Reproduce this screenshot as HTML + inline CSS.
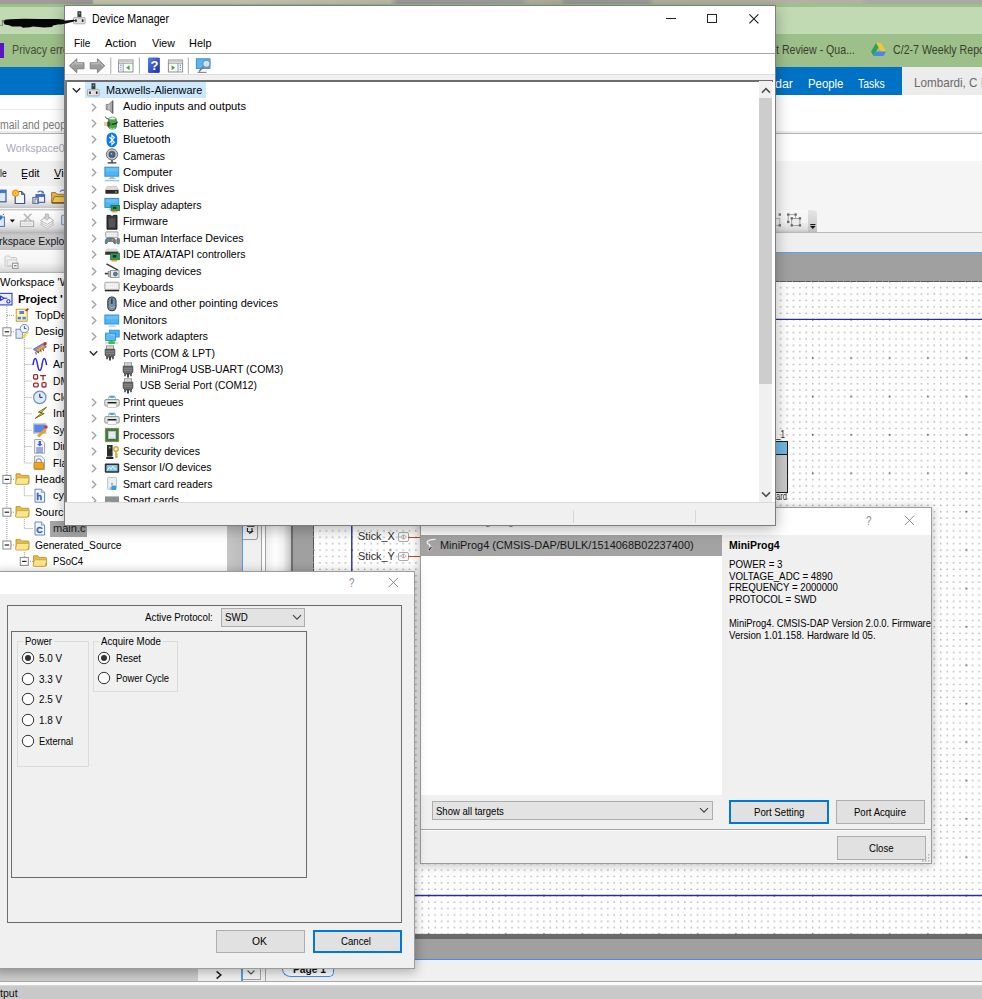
<!DOCTYPE html>
<html><head><meta charset="utf-8"><title>screenshot</title>
<style>
html,body{margin:0;padding:0;}
body{width:982px;height:999px;overflow:hidden;position:relative;background:#fff;font-family:"Liberation Sans",sans-serif;font-size:11px;}
.b{position:absolute;box-sizing:border-box;}
.t{position:absolute;white-space:nowrap;transform-origin:0 50%;}
svg{position:absolute;overflow:visible;}
.win{position:absolute;box-sizing:border-box;overflow:hidden;}
</style></head><body>
<!-- desktop / browser / outlook background -->
<div class="b" style="left:0.00px;top:0.00px;width:982.00px;height:5.00px;background:linear-gradient(90deg,#a29b9c 0,#a29b9c 92px,#c8c6b0 94px,#cbc9b3 250px,#c0beaa 390px,#9d9d9c 398px,#a3a3a0 520px,#b6b5a2 530px,#b0af9f 560px,#9b9b99 566px,#a09f9c 648px,#b5b4a3 655px,#b2b1a1 860px,#a9a9a6 868px,#a9a9a6 982px);"></div>
<div class="b" style="left:0.00px;top:4.00px;width:982.00px;height:4.00px;background:#9bc388;"></div>
<div class="b" style="left:0.00px;top:7.00px;width:982.00px;height:27.00px;background:#c1dab3;"></div>
<div class="b" style="left:0.00px;top:33.60px;width:982.00px;height:33.40px;background:#9dc08a;"></div>
<svg style="left:0;top:14px" width="90" height="18" viewBox="0 14 90 18"><path d="M3.6 21.4 L5 19.8 L10 19.2 L24 18.8 L40 18.9 L58 19.1 L66 20 L74 20.6 L75 21.6 L66 23.5 L58 24.6 L53 25.4 L52 27 L44 27.4 L33 26.6 L30 27.2 L23 27.8 L21 26.6 L12 26.6 L9 25.2 L4.6 24.6 L3.8 22.8Z" fill="#060606"/></svg>
<span class="t" style="left:0.00px;top:15.10px;font-size:11px;line-height:14px;color:#2a2a2a;transform:scaleX(0.5358);">.r</span>
<div class="b" style="left:0.00px;top:43.30px;width:4.00px;height:14.30px;background:#5b12c9;"></div>
<span class="t" style="left:11.70px;top:43.00px;font-size:12px;line-height:14px;color:#4a4a3c;transform:scaleX(0.8905);">Privacy erro</span>
<span class="t" style="left:776.00px;top:43.00px;font-size:12px;line-height:14px;color:#3c3c30;transform:scaleX(0.8841);">t Review - Qua...</span>
<svg style="left:871px;top:43px" width="15" height="13" viewBox="0 0 15 13"><path d="M5 0 L10 0 L15 8.5 L10 8.5Z" fill="#f7c62f"/><path d="M5 0 L0 8.5 L2.5 13 L7.5 4.3Z" fill="#2ba160"/><path d="M2.5 13 L12.5 13 L15 8.5 L5 8.5Z" fill="#4a86e8"/></svg>
<span class="t" style="left:892.50px;top:43.00px;font-size:12px;line-height:14px;color:#3c3c30;transform:scaleX(0.8862);">C/2-7 Weekly Repo</span>
<div class="b" style="left:0.00px;top:66.70px;width:982.00px;height:28.50px;background:#0072c6;"></div>
<div class="b" style="left:901.50px;top:66.70px;width:81.00px;height:28.50px;background:#ececec;"></div>
<span class="t" style="left:775.40px;top:76.80px;font-size:13px;line-height:14px;color:#fff;transform:scaleX(0.9581);">dar</span>
<span class="t" style="left:808.00px;top:76.80px;font-size:13px;line-height:14px;color:#fff;transform:scaleX(0.8746);">People</span>
<span class="t" style="left:858.00px;top:76.80px;font-size:13px;line-height:14px;color:#fff;transform:scaleX(0.8005);">Tasks</span>
<span class="t" style="left:913.50px;top:75.80px;font-size:13px;line-height:14px;color:#6a6a6a;transform:scaleX(0.8971);">Lombardi, C I</span>
<div class="b" style="left:0.00px;top:95.20px;width:982.00px;height:38.30px;background:#fff;"></div>
<div class="b" style="left:0.00px;top:108.60px;width:66.00px;height:1.00px;background:#e3ecf5;"></div>
<span class="t" style="left:0.00px;top:117.80px;font-size:12.5px;line-height:14px;color:#7a7a7a;transform:scaleX(0.8405);">mail and peop</span>
<!-- PSoC Creator window -->
<div class="b" style="left:0.00px;top:130.50px;width:982.00px;height:3.00px;background:#ececec;"></div>
<div class="b" style="left:0.00px;top:133.00px;width:982.00px;height:1.00px;background:#b4b4b4;"></div>
<div class="b" style="left:0.00px;top:134.00px;width:982.00px;height:27.20px;background:#fff;"></div>
<span class="t" style="left:5.70px;top:140.60px;font-size:11px;line-height:14px;color:#a9aab8;transform:scaleX(0.9601);">Workspace0</span>
<div class="b" style="left:0.00px;top:161.20px;width:982.00px;height:71.00px;background:#f5f5f5;"></div>
<div class="b" style="left:0.00px;top:161.20px;width:66.00px;height:25.00px;background:#f0f0f0;"></div>
<span class="t" style="left:0.00px;top:166.20px;font-size:11.5px;line-height:14px;color:#000;transform:scaleX(0.7374);">le</span>
<span class="t" style="left:21.30px;top:166.20px;font-size:11.5px;line-height:14px;color:#000;transform:scaleX(0.9336);">Edit</span>
<span class="t" style="left:54.20px;top:166.20px;font-size:11.5px;line-height:14px;color:#000;transform:scaleX(0.9749);">Vie</span>
<div class="b" style="left:21.50px;top:177.80px;width:5.40px;height:1.00px;background:#000;"></div>
<div class="b" style="left:54.30px;top:177.80px;width:6.00px;height:1.00px;background:#000;"></div>
<div class="b" style="left:0.00px;top:186.20px;width:66.00px;height:22.30px;background:linear-gradient(#fafafa 0,#f4f4f4 55%,#dadada 86%,#c2c2c2 100%);"></div>
<svg style="left:0;top:186px" width="66" height="23" viewBox="0 186 66 23"><rect x="-3" y="190.3" width="9" height="11.5" fill="#dfe9f8" stroke="#46629e" stroke-width="1.3"/><rect x="-3" y="190.3" width="9" height="2.8" fill="#3f78dc"/><path d="M15.2 191.5 L21.5 191.5 L24.6 194.5 L24.6 203.5 L15.2 203.5Z" fill="#f2f5fb" stroke="#3f5488" stroke-width="1.2"/><path d="M21.5 191.5 L21.5 194.5 L24.6 194.5" fill="#6f80a8" stroke="#3f5488" stroke-width=".8"/><circle cx="15.6" cy="193.2" r="3.6" fill="#f59a18"/><circle cx="15.6" cy="193.2" r="2" fill="#ffd84a"/><circle cx="15.6" cy="193.2" r=".8" fill="#f07a10"/><rect x="36" y="194.7" width="8.6" height="7.6" fill="#eef2fa" stroke="#3f5a9a" stroke-width="1.1"/><rect x="36" y="194.7" width="8.6" height="2.2" fill="#3a6ad0"/><rect x="32.8" y="197.4" width="5.6" height="6" fill="#e4ddb0" stroke="#4f68a8" stroke-width="1"/><rect x="35" y="199" width="2.4" height="4.4" fill="#dfe8fa" stroke="#4f68a8" stroke-width=".7"/><path d="M37.6 192.3 q3.2 -2.6 6 0.4" fill="none" stroke="#5a74b0" stroke-width="1.3"/><path d="M42.6 190.6 L44.4 193.6 L41.2 193.6Z" fill="#5a74b0"/><path d="M51.6 192.6 L55.6 192.6 L57 194.3 L66 194.3 L66 202.8 L51.6 202.8Z" fill="#e3b848" stroke="#9a7420" stroke-width=".9"/><path d="M54.6 196.6 L67 196.6 L64.2 202.8 L51.8 202.8Z" fill="#f3c95a" stroke="#8a6414" stroke-width=".8"/><path d="M52 203 h12" stroke="#3a2a08" stroke-width=".8"/><path d="M60 191.6 q2.6 -2.4 5.4 -0.6" fill="none" stroke="#5a74b0" stroke-width="1.2"/></svg>
<div class="b" style="left:0.00px;top:208.50px;width:66.00px;height:23.50px;background:linear-gradient(#bdbdbd 0,#fdfdfd 10%,#f6f6f6 50%,#dedede 82%,#c0c0c0 100%);"></div>
<svg style="left:0;top:208px" width="66" height="24" viewBox="0 208 66 24"><rect x="-2" y="217" width="6.4" height="9.4" fill="#dfe8f8" stroke="#4f6db0" stroke-width="1"/><path d="M-1 214 L2.8 217.5 L0.3 220.4Z" fill="#2f6fe0"/><circle cx="3.4" cy="214.3" r=".6" fill="#3a60b0"/><circle cx="1.8" cy="215.9" r=".6" fill="#3a60b0"/><path d="M9.8 219.4 L15 219.4 L12.4 222.6Z" fill="#111"/><rect x="20.4" y="221" width="13.2" height="5.6" fill="#ededed" stroke="#a9a9a9" stroke-width="1"/><path d="M23.8 213.8 L31.4 221.4 M31.4 213.8 L23.8 221.4" stroke="#b9b9b9" stroke-width="1.6"/><path d="M22.3 224 h9.6" stroke="#bdbdbd" stroke-width=".9" stroke-dasharray="1 1"/><path d="M40.6 224.6 L47.2 228.6 L53.8 224.6 L47.2 220.6Z" fill="#f3f3f3" stroke="#b4b4b4" stroke-width=".8"/><path d="M40.6 222.6 L47.2 226.6 L53.8 222.6 L47.2 218.6Z" fill="#f3f3f3" stroke="#b4b4b4" stroke-width=".8"/><path d="M40.6 220.4 L47.2 224.4 L53.8 220.4 L47.2 216.4Z" fill="#f6f6f6" stroke="#ababab" stroke-width=".8"/><path d="M45.4 214 h3 v3.2 h1.8 l-3.3 3 l-3.3 -3 h1.8z" fill="#cfcfcf" stroke="#a6a6a6" stroke-width=".7"/><rect x="61.6" y="215.2" width="6" height="9.6" rx="1" fill="#e4ebf8" stroke="#7f97c8" stroke-width="1.1"/></svg>
<div class="b" style="left:0.00px;top:232.00px;width:66.00px;height:18.30px;background:linear-gradient(#b4b4b4 0,#c9c9c9 18%,#c9c9c9 80%,#c0c0c0 100%);"></div>
<span class="t" style="left:-0.60px;top:234.10px;font-size:11.5px;line-height:14px;color:#15151d;transform:scaleX(0.9041);">rkspace Explo</span>
<div class="b" style="left:0.00px;top:250.30px;width:66.00px;height:22.30px;background:linear-gradient(#fafafa 0,#f5f5f5 55%,#dadada 90%,#c6c6c6 100%);"></div>
<svg style="left:0;top:250px" width="30" height="23" viewBox="0 250 30 23"><path d="M5 257.6 q0 -1.6 1.4 -1.6 h3 l1.4 1.6 h4.4 q1.4 0 1.4 1.4 v6.2 q0 1.2 -1.4 1.2 h-8.8 q-1.4 0 -1.4 -1.2Z" fill="#f1f1f1" stroke="#c6c6c6" stroke-width="1"/><path d="M7.2 259.8 h9.8 v5.6 h-9.8Z" fill="#ededed" stroke="#cdcdcd" stroke-width=".9"/><rect x="12.6" y="263.2" width="5.4" height="5.2" fill="#fafafa" stroke="#8e8e8e" stroke-width="1"/><path d="M14 265.8 h2.6" stroke="#555" stroke-width="1"/></svg>
<div class="b" style="left:0.00px;top:272.40px;width:243.00px;height:1.00px;background:#b2b2b2;"></div>
<div class="b" style="left:0.00px;top:273.40px;width:228.00px;height:297.40px;background:#fff;"></div>
<svg style="left:0;top:0" width="243" height="580" viewBox="0 0 243 580" fill="none"><path d="M6.9 306.0 V545.0" stroke="#9a9a9a" stroke-width="1" stroke-dasharray="1 1"/><path d="M24.3 338.8 V463.0" stroke="#9a9a9a" stroke-width="1" stroke-dasharray="1 1"/><path d="M7.0 315.4 H15.0" stroke="#9a9a9a" stroke-width="1" stroke-dasharray="1 1"/><path d="M7.0 331.8 H15.0" stroke="#9a9a9a" stroke-width="1" stroke-dasharray="1 1"/><path d="M7.0 479.4 H15.0" stroke="#9a9a9a" stroke-width="1" stroke-dasharray="1 1"/><path d="M7.0 512.2 H15.0" stroke="#9a9a9a" stroke-width="1" stroke-dasharray="1 1"/><path d="M7.0 545.0 H15.0" stroke="#9a9a9a" stroke-width="1" stroke-dasharray="1 1"/><path d="M24.5 348.2 H32.0" stroke="#9a9a9a" stroke-width="1" stroke-dasharray="1 1"/><path d="M24.5 364.6 H32.0" stroke="#9a9a9a" stroke-width="1" stroke-dasharray="1 1"/><path d="M24.5 381.0 H32.0" stroke="#9a9a9a" stroke-width="1" stroke-dasharray="1 1"/><path d="M24.5 397.4 H32.0" stroke="#9a9a9a" stroke-width="1" stroke-dasharray="1 1"/><path d="M24.5 413.8 H32.0" stroke="#9a9a9a" stroke-width="1" stroke-dasharray="1 1"/><path d="M24.5 430.2 H32.0" stroke="#9a9a9a" stroke-width="1" stroke-dasharray="1 1"/><path d="M24.5 446.6 H32.0" stroke="#9a9a9a" stroke-width="1" stroke-dasharray="1 1"/><path d="M24.5 463.0 H32.0" stroke="#9a9a9a" stroke-width="1" stroke-dasharray="1 1"/><path d="M24.3 486.4 V495.8" stroke="#9a9a9a" stroke-width="1" stroke-dasharray="1 1"/><path d="M24.5 495.8 H33.0" stroke="#9a9a9a" stroke-width="1" stroke-dasharray="1 1"/><path d="M24.3 519.2 V528.6" stroke="#9a9a9a" stroke-width="1" stroke-dasharray="1 1"/><path d="M24.5 528.6 H33.0" stroke="#9a9a9a" stroke-width="1" stroke-dasharray="1 1"/><path d="M24.3 552.0 V561.4" stroke="#9a9a9a" stroke-width="1" stroke-dasharray="1 1"/><path d="M28.0 561.4 H33.0" stroke="#9a9a9a" stroke-width="1" stroke-dasharray="1 1"/><rect x="2.9" y="327.8" width="8" height="8" fill="#fff" stroke="#8a8a8a" stroke-width="1"/><path d="M4.7 331.8 h4.4" stroke="#222" stroke-width="1.2"/><rect x="2.9" y="475.4" width="8" height="8" fill="#fff" stroke="#8a8a8a" stroke-width="1"/><path d="M4.7 479.4 h4.4" stroke="#222" stroke-width="1.2"/><rect x="2.9" y="508.2" width="8" height="8" fill="#fff" stroke="#8a8a8a" stroke-width="1"/><path d="M4.7 512.2 h4.4" stroke="#222" stroke-width="1.2"/><rect x="2.9" y="541.0" width="8" height="8" fill="#fff" stroke="#8a8a8a" stroke-width="1"/><path d="M4.7 545.0 h4.4" stroke="#222" stroke-width="1.2"/><rect x="20.3" y="557.4" width="8" height="8" fill="#fff" stroke="#8a8a8a" stroke-width="1"/><path d="M22.1 561.4 h4.4" stroke="#222" stroke-width="1.2"/><path d="M16.0 473.8 h4.2 l1.4 1.6 h6.4 q1 0 1 1 v6.6 q0 1 -1 1 h-11 q-1 0 -1 -1 z" fill="#e9bd43" stroke="#b18a22" stroke-width=".8"/><path d="M17.6 477.8 h10.6 q1 0 .8 1 l-1 4.6 q-.2 1 -1.2 1 h-10.4 q-1 0 -.8 -1 l1 -4.6 q.2 -1 1 -1z" fill="#fbe68e" stroke="#c49a2a" stroke-width=".7"/><path d="M16.0 506.6 h4.2 l1.4 1.6 h6.4 q1 0 1 1 v6.6 q0 1 -1 1 h-11 q-1 0 -1 -1 z" fill="#e9bd43" stroke="#b18a22" stroke-width=".8"/><path d="M17.6 510.6 h10.6 q1 0 .8 1 l-1 4.6 q-.2 1 -1.2 1 h-10.4 q-1 0 -.8 -1 l1 -4.6 q.2 -1 1 -1z" fill="#fbe68e" stroke="#c49a2a" stroke-width=".7"/><path d="M16.0 539.4 h4.2 l1.4 1.6 h6.4 q1 0 1 1 v6.6 q0 1 -1 1 h-11 q-1 0 -1 -1 z" fill="#e9bd43" stroke="#b18a22" stroke-width=".8"/><path d="M17.6 543.4 h10.6 q1 0 .8 1 l-1 4.6 q-.2 1 -1.2 1 h-10.4 q-1 0 -.8 -1 l1 -4.6 q.2 -1 1 -1z" fill="#fbe68e" stroke="#c49a2a" stroke-width=".7"/><path d="M33.6 555.8 h4.2 l1.4 1.6 h6.4 q1 0 1 1 v6.6 q0 1 -1 1 h-11 q-1 0 -1 -1 z" fill="#e9bd43" stroke="#b18a22" stroke-width=".8"/><path d="M35.2 559.8 h10.6 q1 0 .8 1 l-1 4.6 q-.2 1 -1.2 1 h-10.4 q-1 0 -.8 -1 l1 -4.6 q.2 -1 1 -1z" fill="#fbe68e" stroke="#c49a2a" stroke-width=".7"/><path d="M35.0 489.2 h6.4 l3.2 3.2 v9.8 h-9.6z" fill="#f4f8fe" stroke="#5f84c4" stroke-width="1"/><path d="M41.4 489.2 v3.2 h3.2" fill="#c9d8f0" stroke="#5f84c4" stroke-width=".7"/><text x="36.3" y="500.4" font-family="Liberation Sans" font-weight="bold" font-size="9.5" fill="#2a5fc0" stroke="#2a5fc0" stroke-width=".3">h</text><path d="M35.0 522.0 h6.4 l3.2 3.2 v9.8 h-9.6z" fill="#f4f8fe" stroke="#5f84c4" stroke-width="1"/><path d="M41.4 522.0 v3.2 h3.2" fill="#c9d8f0" stroke="#5f84c4" stroke-width=".7"/><text x="36.3" y="533.2" font-family="Liberation Sans" font-weight="bold" font-size="9" fill="#2a5fc0" stroke="#2a5fc0" stroke-width=".3">C</text><rect x="-2" y="293.4" width="14" height="11.5" fill="#e8f0ff" stroke="#3b4fd0" stroke-width="1.2"/><path d="M0.6 296.2 l3.6 2 l-3.6 2z M4.4 298.2 h3" stroke="#2630c8" stroke-width="1.1" fill="#fff"/><circle cx="8.4" cy="301.4" r="1.6" stroke="#2630c8" stroke-width="1.1" fill="#fff"/><rect x="16.2" y="309.2" width="11" height="12" fill="#fdf2b0" stroke="#b59a30" stroke-width=".9"/><rect x="19.4" y="311.0" width="4.6" height="3" fill="#5b7fe0"/><rect x="17.6" y="316.8" width="3.4" height="2.6" fill="#5b7fe0"/><rect x="22.4" y="316.8" width="3.4" height="2.6" fill="#5b7fe0"/><path d="M25.6 311.0 l2.8 -2.4" stroke="#d02020" stroke-width="1.6"/><rect x="16" y="329.2" width="6.4" height="9" fill="#dfe7f5" stroke="#6f86b8" stroke-width=".9"/><circle cx="24.4" cy="328.6" r="4.2" fill="#eef4fd" stroke="#6f8cc8" stroke-width="1"/><path d="M24.4 328.6 v-2.6 M24.4 328.6 h2" stroke="#334" stroke-width=".8"/><path d="M28.6 332.0 l-5 3.6 l2 .2 l-2.4 2.4" stroke="#e8d820" stroke-width="1.5"/><path d="M33.4 349.2 l9 -5.4 l4 3 l-9 5.6z" fill="#8a8fd0" stroke="#5458a8" stroke-width=".8"/><path d="M36.6 349.8 l6.6 -4.2 l1.8 2.4 l-6.6 4.2z" fill="#f3a52a"/><circle cx="45" cy="343.8" r="1.8" fill="#d02828"/><path d="M35.6 352.0 l.8 2.6 M38 350.8 l.8 2.6 M40.4 349.6 l.8 2.6 M42.8 348.4 l.8 2.6" stroke="#444" stroke-width=".9"/><path d="M33 365.2 c1.2 -9 3.2 -9 4.6 0 c1.2 7 3.2 7 4.4 0 c1.2 -9 3.2 -9 4.6 0" stroke="#2a2ae8" stroke-width="1.5"/><g stroke="#a02828" stroke-width="1.3"><rect x="33.6" y="374.6" width="4" height="4.4" rx="1"/><path d="M40 375.6 h6 M43 375.6 v4.6"/><rect x="42" y="382.6" width="4" height="4.4" rx="1"/><rect x="33.6" y="383.2" width="4.6" height="3.6" rx="1"/></g><circle cx="39.8" cy="397.4" r="6.2" fill="#dcebfb" stroke="#6d8fc8" stroke-width="1.2"/><path d="M39.8 397.4 v-3.6 M39.8 397.4 h2.6" stroke="#223" stroke-width="1"/><path d="M46.4 407.2 l-8 5 l3.4 .6 l-6.6 5.6 l9 -4.8 l-3.2 -.8z" fill="#f2e21a" stroke="#55500a" stroke-width=".8"/><rect x="33.6" y="424.0" width="12" height="9" fill="#5a86e8" stroke="#b8c0d0" stroke-width="1.4"/><path d="M37 435.6 l7.6 -7 l2 2 l-7.6 7z" fill="#f0a020"/><circle cx="46" cy="427.0" r="1.7" fill="#d03030"/><path d="M34.6 439.6 h6.6 l3.4 3.2 v10.4 h-10z" fill="#f3f6fc" stroke="#8a9cc0" stroke-width=".9"/><path d="M38.6 441.0 h2.4 v3 h1.6 l-2.8 2.6 l-2.8 -2.6 h1.6z" fill="#3a62d8"/><path d="M36.2 448.0 h6.8 M36.2 450.0 h6.8 M36.2 452.0 h6.8" stroke="#4a5cb8" stroke-width="1"/><path d="M34.6 456.0 h6.6 l3.4 3.2 v10.4 h-10z" fill="#f3f6fc" stroke="#8a9cc0" stroke-width=".9"/><rect x="34" y="462.4" width="9.6" height="6.6" rx="1" fill="#f0a418" stroke="#b87408" stroke-width=".8"/><path d="M36.4 462.2 v-2 q2.4 -2.6 4.8 0 v2" stroke="#999" stroke-width="1.2"/></svg>
<span class="t" style="left:0.40px;top:275.40px;font-size:11.5px;line-height:14px;color:#000;transform:scaleX(0.9517);">Workspace 'W</span>
<span class="t" style="left:17.90px;top:291.50px;font-size:11.5px;line-height:14px;color:#000;font-weight:bold;">Project  '</span>
<div class="b" style="left:50.40px;top:520.50px;width:36.40px;height:16.00px;background:#a6a6a6;"></div>
<span class="t" style="left:52.50px;top:521.10px;font-size:11.5px;line-height:14px;color:#1a1a1a;transform:scaleX(0.9596);">main.c</span>
<span class="t" style="left:35.00px;top:307.90px;font-size:11.5px;line-height:14px;color:#000;transform:scaleX(0.9627);">TopDe</span>
<span class="t" style="left:35.00px;top:324.30px;font-size:11.5px;line-height:14px;color:#000;transform:scaleX(0.9778);">Design</span>
<span class="t" style="left:52.50px;top:340.70px;font-size:11.5px;line-height:14px;color:#000;transform:scaleX(0.9025);">Pin</span>
<span class="t" style="left:52.50px;top:357.10px;font-size:11.5px;line-height:14px;color:#000;transform:scaleX(0.9242);">An</span>
<span class="t" style="left:52.50px;top:373.50px;font-size:11.5px;line-height:14px;color:#000;transform:scaleX(0.8946);">DM</span>
<span class="t" style="left:52.50px;top:389.90px;font-size:11.5px;line-height:14px;color:#000;transform:scaleX(0.9272);">Clo</span>
<span class="t" style="left:52.50px;top:406.30px;font-size:11.5px;line-height:14px;color:#000;transform:scaleX(0.9386);">Int</span>
<span class="t" style="left:52.50px;top:422.70px;font-size:11.5px;line-height:14px;color:#000;transform:scaleX(0.8346);">Sys</span>
<span class="t" style="left:52.50px;top:439.10px;font-size:11.5px;line-height:14px;color:#000;transform:scaleX(0.8850);">Dir</span>
<span class="t" style="left:52.50px;top:455.50px;font-size:11.5px;line-height:14px;color:#000;transform:scaleX(0.8764);">Fla</span>
<span class="t" style="left:35.00px;top:471.90px;font-size:11.5px;line-height:14px;color:#000;transform:scaleX(0.9444);">Heade</span>
<span class="t" style="left:52.50px;top:488.30px;font-size:11.5px;line-height:14px;color:#000;transform:scaleX(0.9565);">cy</span>
<span class="t" style="left:35.00px;top:504.70px;font-size:11.5px;line-height:14px;color:#000;transform:scaleX(0.9469);">Source</span>
<span class="t" style="left:35.00px;top:537.50px;font-size:11.5px;line-height:14px;color:#000;transform:scaleX(0.8902);">Generated_Source</span>
<span class="t" style="left:52.50px;top:553.90px;font-size:11.5px;line-height:14px;color:#000;transform:scaleX(0.8233);">PSoC4</span>
<div class="b" style="left:227.40px;top:273.40px;width:14.30px;height:297.40px;background:linear-gradient(90deg,#c6c6c6,#bcbcbc);"></div>
<div class="b" style="left:241.60px;top:273.40px;width:1.50px;height:297.40px;background:#4b9cf0;"></div>
<div class="b" style="left:243.00px;top:273.40px;width:18.00px;height:297.40px;background:#f0f0f0;"></div>
<div class="b" style="left:243.00px;top:520.00px;width:15.30px;height:19.50px;background:#f4f4f4;border:1px solid #9c9c9c;border-left:none;border-radius:0 0 3px 0;"></div>
<svg style="left:246px;top:525px" width="10" height="10" viewBox="0 0 10 10"><path d="M1 1.2 h7.6 M1.4 3 v3.2 q2.4 1.6 4.6 0 v-3.2 M3.2 8.6 l4 -2.6" stroke="#222" stroke-width="1.1" fill="none"/></svg>
<div class="b" style="left:261.00px;top:273.40px;width:1.00px;height:297.40px;background:#a4a4a4;"></div>
<div class="b" style="left:262.00px;top:273.40px;width:3.00px;height:297.40px;background:#fcfcfc;"></div>
<div class="b" style="left:265.00px;top:273.40px;width:1.00px;height:297.40px;background:#a4a4a4;"></div>
<div class="b" style="left:266.00px;top:273.40px;width:25.60px;height:297.40px;background:linear-gradient(90deg,#efefef 0,#fdfdfd 35%,#f2f2f2 65%,#bebebe 100%);"></div>
<div class="b" style="left:291.40px;top:253.00px;width:1.60px;height:318.00px;background:#6e6e6e;"></div>
<div class="b" style="left:770.00px;top:209.60px;width:47.40px;height:22.60px;background:linear-gradient(#f9f9f9 0,#f3f3f3 55%,#d9d9d9 90%,#c4c4c4 100%);border-radius:0 4px 0 0;"></div>
<div class="b" style="left:807.60px;top:209.60px;width:9.80px;height:22.60px;background:linear-gradient(#e6e6e6,#cfcfcf 70%,#bdbdbd);border-radius:0 4px 0 0;"></div>
<svg style="left:770px;top:209px" width="48" height="24" viewBox="770 209 48 24" fill="none"><rect x="771" y="218.3" width="8.8" height="7" fill="#efefef" stroke="#a2a2a2" stroke-width=".8"/><rect x="778.6" y="213.4" width="2.3" height="2.3" fill="#686868"/><rect x="778.6" y="224.2" width="2.3" height="2.3" fill="#686868"/><path d="M788.2 214.6 H795.6 M788.2 214.6 V221.9 M795.6 214.6 V218.4" stroke="#8e8e8e" stroke-width=".8"/><rect x="791.7" y="218.4" width="8.2" height="7" fill="#ececec" stroke="#8a8a8a" stroke-width=".8"/><rect x="787.1" y="213.4" width="2.3" height="2.3" fill="#686868"/><rect x="794.5" y="213.4" width="2.3" height="2.3" fill="#686868"/><rect x="787.1" y="220.8" width="2.3" height="2.3" fill="#686868"/><rect x="790.6" y="217.2" width="2.3" height="2.3" fill="#686868"/><rect x="798.8" y="217.2" width="2.3" height="2.3" fill="#686868"/><rect x="790.6" y="224.2" width="2.3" height="2.3" fill="#686868"/><rect x="798.8" y="224.2" width="2.3" height="2.3" fill="#686868"/><path d="M810.2 224.6 h5.2" stroke="#111" stroke-width="1.1"/><path d="M810 226 h5.6 l-2.8 3z" fill="#111"/></svg>
<div class="b" style="left:243.00px;top:232.00px;width:739.00px;height:1.00px;background:#b9b9b9;"></div>
<div class="b" style="left:243.00px;top:233.00px;width:739.00px;height:18.60px;background:#efefef;"></div>
<div class="b" style="left:243.00px;top:251.60px;width:739.00px;height:1.30px;background:#5aa3ea;"></div>
<div class="b" style="left:293.00px;top:253.00px;width:689.00px;height:706.00px;background:#a0a0a0;"></div>
<svg style="left:313.40px;top:281.30px" width="670.60" height="652.80" viewBox="0 0 670.60 652.80"><defs><pattern id="grid" x="-310.35" y="-272.25" width="38.4" height="38.4" patternUnits="userSpaceOnUse"><circle cx="3.70" cy="3.70" r="0.95" fill="#4a4a4a"/><circle cx="3.70" cy="10.10" r="0.85" fill="#acacac"/><circle cx="3.70" cy="16.50" r="0.85" fill="#acacac"/><circle cx="3.70" cy="22.90" r="0.85" fill="#acacac"/><circle cx="3.70" cy="29.30" r="0.85" fill="#acacac"/><circle cx="3.70" cy="35.70" r="0.85" fill="#acacac"/><circle cx="10.10" cy="3.70" r="0.85" fill="#acacac"/><circle cx="10.10" cy="10.10" r="0.85" fill="#acacac"/><circle cx="10.10" cy="16.50" r="0.85" fill="#acacac"/><circle cx="10.10" cy="22.90" r="0.85" fill="#acacac"/><circle cx="10.10" cy="29.30" r="0.85" fill="#acacac"/><circle cx="10.10" cy="35.70" r="0.85" fill="#acacac"/><circle cx="16.50" cy="3.70" r="0.85" fill="#acacac"/><circle cx="16.50" cy="10.10" r="0.85" fill="#acacac"/><circle cx="16.50" cy="16.50" r="0.85" fill="#acacac"/><circle cx="16.50" cy="22.90" r="0.85" fill="#acacac"/><circle cx="16.50" cy="29.30" r="0.85" fill="#acacac"/><circle cx="16.50" cy="35.70" r="0.85" fill="#acacac"/><circle cx="22.90" cy="3.70" r="0.85" fill="#acacac"/><circle cx="22.90" cy="10.10" r="0.85" fill="#acacac"/><circle cx="22.90" cy="16.50" r="0.85" fill="#acacac"/><circle cx="22.90" cy="22.90" r="0.85" fill="#acacac"/><circle cx="22.90" cy="29.30" r="0.85" fill="#acacac"/><circle cx="22.90" cy="35.70" r="0.85" fill="#acacac"/><circle cx="29.30" cy="3.70" r="0.85" fill="#acacac"/><circle cx="29.30" cy="10.10" r="0.85" fill="#acacac"/><circle cx="29.30" cy="16.50" r="0.85" fill="#acacac"/><circle cx="29.30" cy="22.90" r="0.85" fill="#acacac"/><circle cx="29.30" cy="29.30" r="0.85" fill="#acacac"/><circle cx="29.30" cy="35.70" r="0.85" fill="#acacac"/><circle cx="35.70" cy="3.70" r="0.85" fill="#acacac"/><circle cx="35.70" cy="10.10" r="0.85" fill="#acacac"/><circle cx="35.70" cy="16.50" r="0.85" fill="#acacac"/><circle cx="35.70" cy="22.90" r="0.85" fill="#acacac"/><circle cx="35.70" cy="29.30" r="0.85" fill="#acacac"/><circle cx="35.70" cy="35.70" r="0.85" fill="#acacac"/></pattern></defs><rect x="0" y="0" width="670.60" height="652.80" fill="#fff"/><rect x="0" y="0" width="670.60" height="652.80" fill="url(#grid)"/><path d="M38.30 38.40 H670.60" stroke="#2b2ba4" stroke-width="1.4"/><path d="M38.30 614.50 H670.60" stroke="#2b2ba4" stroke-width="1.4"/><path d="M38.80 38.40 V614.50" stroke="#2b2ba4" stroke-width="1.4"/></svg>
<div class="b" style="left:313.00px;top:281.00px;width:669.00px;height:1.00px;background:repeating-linear-gradient(90deg,#5a5a5a 0,#5a5a5a 5.6px,#9a9a9a 5.6px,#9a9a9a 6.4px);"></div>
<div class="b" style="left:313.00px;top:281.00px;width:1.00px;height:653.00px;background:repeating-linear-gradient(180deg,#5a5a5a 0,#5a5a5a 5.6px,#9a9a9a 5.6px,#9a9a9a 6.4px);"></div>
<div class="b" style="left:313.40px;top:933.60px;width:669.00px;height:5.80px;background:#6b6b6b;"></div>
<div class="b" style="left:293.00px;top:959.00px;width:689.00px;height:1.30px;background:#3f8fe6;"></div>
<div class="b" style="left:775.00px;top:440.80px;width:13.00px;height:51.80px;background:#cacaca;border:1px solid #1c1c1c;"></div>
<div class="b" style="left:775.00px;top:440.80px;width:13.00px;height:13.80px;background:#6cbadf;border:1px solid #1c1c1c;"></div>
<span class="t" style="left:776.20px;top:426.70px;font-size:11px;line-height:14px;color:#1e1e1e;transform:scaleX(0.7357);">_1</span>
<span class="t" style="left:775.80px;top:490.10px;font-size:10px;line-height:14px;color:#2a2a2a;transform:scaleX(0.7473);">ard</span>
<span class="t" style="left:358.10px;top:529.40px;font-size:10.5px;line-height:14px;color:#2c2c2c;transform:scaleX(1.0310);">Stick_X</span>
<div class="b" style="left:398.00px;top:532.30px;width:10.60px;height:9.60px;background:#fff;border:1px solid #ababab;border-radius:2px;"></div>
<svg style="left:399.4px;top:534.1px" width="8" height="6" viewBox="0 0 8 6"><path d="M0.2 3 h1.6 M4.2 0.8 L1.8 3 L4.2 5.2Z M4.6 0.8 v4.4 M5 0.8 L7.4 3 L5 5.2" stroke="#a6a6a6" stroke-width=".85" fill="none"/></svg>
<div class="b" style="left:408.40px;top:536.70px;width:12.40px;height:1.30px;background:#c8501e;"></div>
<span class="t" style="left:358.10px;top:548.60px;font-size:10.5px;line-height:14px;color:#2c2c2c;transform:scaleX(1.0310);">Stick_Y</span>
<div class="b" style="left:398.00px;top:551.50px;width:10.60px;height:9.60px;background:#fff;border:1px solid #ababab;border-radius:2px;"></div>
<svg style="left:399.4px;top:553.3px" width="8" height="6" viewBox="0 0 8 6"><path d="M0.2 3 h1.6 M4.2 0.8 L1.8 3 L4.2 5.2Z M4.6 0.8 v4.4 M5 0.8 L7.4 3 L5 5.2" stroke="#a6a6a6" stroke-width=".85" fill="none"/></svg>
<div class="b" style="left:408.40px;top:555.90px;width:12.40px;height:1.30px;background:#c8501e;"></div>
<div class="b" style="left:0.00px;top:960.30px;width:982.00px;height:20.50px;background:#f0f0f0;"></div>
<div class="b" style="left:0.00px;top:969.00px;width:198.00px;height:11.80px;background:linear-gradient(#c2c2c2,#cdcdcd);"></div>
<div class="b" style="left:241.40px;top:960.30px;width:1.40px;height:20.50px;background:#4b9cf0;"></div>
<div class="b" style="left:242.80px;top:960.30px;width:18.60px;height:20.00px;background:#f3f3f3;border-right:1px solid #a4a4a4;border-bottom:1px solid #a4a4a4;"></div>
<div class="b" style="left:265.20px;top:960.30px;width:716.80px;height:20.50px;background:#f0f0f0;border-left:1px solid #a4a4a4;"></div>
<svg style="left:214px;top:970px" width="10" height="10" viewBox="0 0 10 10"><path d="M2.6 1.4 L6.8 5 L2.6 8.6" stroke="#222" stroke-width="1.6" fill="none"/></svg>
<svg style="left:246px;top:969px" width="10" height="8" viewBox="0 0 10 8"><path d="M1.6 1.6 L5 5 L8.4 1.6" stroke="#444" stroke-width="1.1" fill="none"/></svg>
<div class="b" style="left:281.60px;top:960.00px;width:52.00px;height:17.00px;background:#fbfdff;border:1.3px solid #3f8fe6;border-top:none;border-radius:0 0 5px 9px / 0 0 5px 8px;"></div>
<span class="t" style="left:292.50px;top:962.10px;font-size:11px;line-height:14px;color:#111;font-weight:bold;transform:scaleX(0.9305);">Page 1</span>
<div class="b" style="left:0.00px;top:980.80px;width:982.00px;height:1.20px;background:#a9a9a9;"></div>
<div class="b" style="left:0.00px;top:982.00px;width:982.00px;height:2.60px;background:#fbfbfb;"></div>
<div class="b" style="left:0.00px;top:984.60px;width:982.00px;height:1.00px;background:#d6d6d6;"></div>
<div class="b" style="left:0.00px;top:985.60px;width:982.00px;height:13.40px;background:#c9c9c9;"></div>
<span class="t" style="left:0.00px;top:986.10px;font-size:11.5px;line-height:14px;color:#111;transform:scaleX(0.9176);">tput</span>
<!-- Select Debug Target dialog -->
<div class="win" style="left:420.4px;top:506.6px;width:511.4px;height:357.8px;background:#f0f0f0;border:1px solid #9b9b9b;overflow:visible;box-shadow:0 1px 9px 1px rgba(0,0,0,.24);"></div>
<div class="b" style="left:421.40px;top:507.60px;width:509.40px;height:27.60px;background:#fff;"></div>
<span class="t" style="left:429.20px;top:513.50px;font-size:11.5px;line-height:14px;color:#7e7e7e;transform:scaleX(0.8992);">Select Debug Target</span>
<span class="t" style="left:866.30px;top:513.90px;font-size:12px;line-height:14px;color:#8a8a8a;transform:scaleX(0.8092);">?</span>
<svg style="left:904.3px;top:515.2px" width="11" height="11" viewBox="0 0 11 11"><path d="M0.8 0.8 L10 10 M10 0.8 L0.8 10" stroke="#8c8c8c" stroke-width="1" fill="none"/></svg>
<div class="b" style="left:421.40px;top:535.30px;width:300.40px;height:259.50px;background:#fff;"></div>
<div class="b" style="left:421.40px;top:535.30px;width:300.40px;height:20.30px;background:#a3a3a3;"></div>
<svg style="left:424px;top:538px" width="14" height="15" viewBox="0 0 14 15" fill="none"><path d="M3.2 3.6 q3 -2.6 8.4 -2.2" stroke="#f4f4f4" stroke-width="1.3"/><path d="M3.4 3.4 q-1 1.6 1.6 3 q1.6 1 1 2.6" stroke="#f4f4f4" stroke-width="1.3"/><path d="M7.2 8.2 l-3.4 3.8 l1.6 1.2 l2.6 -3.6z" fill="#161616" stroke="#f0f0f0" stroke-width=".7"/></svg>
<span class="t" style="left:440.30px;top:538.30px;font-size:11px;line-height:14px;color:#161616;transform:scaleX(0.9947);">MiniProg4 (CMSIS-DAP/BULK/1514068B02237400)</span>
<span class="t" style="left:728.70px;top:537.70px;font-size:11px;line-height:14px;color:#000;font-weight:bold;transform:scaleX(0.9536);">MiniProg4</span>
<span class="t" style="left:728.70px;top:556.60px;font-size:11px;line-height:14px;color:#000;transform:scaleX(0.8885);">POWER = 3</span>
<span class="t" style="left:728.70px;top:568.50px;font-size:11px;line-height:14px;color:#000;transform:scaleX(0.8879);">VOLTAGE_ADC = 4890</span>
<span class="t" style="left:728.70px;top:580.40px;font-size:11px;line-height:14px;color:#000;transform:scaleX(0.8759);">FREQUENCY = 2000000</span>
<span class="t" style="left:728.70px;top:592.20px;font-size:11px;line-height:14px;color:#000;transform:scaleX(0.8820);">PROTOCOL = SWD</span>
<span class="t" style="left:728.70px;top:616.00px;font-size:11px;line-height:14px;color:#000;transform:scaleX(0.8568);">MiniProg4. CMSIS-DAP Version 2.0.0. Firmware</span>
<span class="t" style="left:728.70px;top:627.90px;font-size:11px;line-height:14px;color:#000;transform:scaleX(0.8782);">Version 1.01.158. Hardware Id 05.</span>
<div class="b" style="left:432.00px;top:800.60px;width:280.80px;height:19.60px;background:#e3e3e3;border:1px solid #adadad;"></div>
<span class="t" style="left:436.00px;top:803.70px;font-size:11px;line-height:14px;color:#000;transform:scaleX(0.8664);">Show all targets</span>
<svg style="left:699px;top:807px" width="10" height="7" viewBox="0 0 10 7"><path d="M1 1.2 L5 5.2 L9 1.2" stroke="#404040" stroke-width="1.1" fill="none"/></svg>
<div class="b" style="left:729.40px;top:800.00px;width:99.40px;height:23.80px;background:#e1e1e1;border:2px solid #0078d7;"></div>
<span class="t" style="left:753.60px;top:804.50px;font-size:11px;line-height:14px;color:#000;transform:scaleX(0.8769);">Port Setting</span>
<div class="b" style="left:836.00px;top:800.00px;width:89.20px;height:23.80px;background:#e1e1e1;border:1px solid #adadad;"></div>
<span class="t" style="left:854.00px;top:804.50px;font-size:11px;line-height:14px;color:#000;transform:scaleX(0.8679);">Port Acquire</span>
<div class="b" style="left:837.00px;top:836.40px;width:89.20px;height:23.20px;background:#e1e1e1;border:1px solid #adadad;"></div>
<span class="t" style="left:868.80px;top:840.60px;font-size:11px;line-height:14px;color:#000;transform:scaleX(0.8748);">Close</span>
<div class="b" style="left:421.40px;top:829.40px;width:509.40px;height:1.00px;background:#a2a2a2;"></div>
<div class="b" style="left:421.40px;top:830.40px;width:509.40px;height:1.00px;background:#fdfdfd;"></div>
<svg style="left:921px;top:853px" width="10" height="10" viewBox="0 0 10 10" fill="#b8b8b8"><rect x="7" y="1" width="1.6" height="1.6"/><rect x="4" y="4" width="1.6" height="1.6"/><rect x="7" y="4" width="1.6" height="1.6"/><rect x="1" y="7" width="1.6" height="1.6"/><rect x="4" y="7" width="1.6" height="1.6"/><rect x="7" y="7" width="1.6" height="1.6"/></svg>
<!-- Port Setting dialog -->
<div class="win" style="left:-4px;top:570.8px;width:419.3px;height:398.0px;background:#f0f0f0;border:1px solid #9b9b9b;overflow:visible;box-shadow:0 2px 10px 1px rgba(0,0,0,.27);"></div>
<div class="b" style="left:0.00px;top:571.80px;width:414.30px;height:22.60px;background:#fff;"></div>
<span class="t" style="left:349.30px;top:575.50px;font-size:12px;line-height:14px;color:#8a8a8a;transform:scaleX(0.8092);">?</span>
<svg style="left:387.6px;top:577.2px" width="11" height="11" viewBox="0 0 11 11"><path d="M0.8 0.8 L10 10 M10 0.8 L0.8 10" stroke="#8c8c8c" stroke-width="1" fill="none"/></svg>
<div class="b" style="left:7.40px;top:605.40px;width:394.40px;height:318.00px;border:1px solid #6c6c6c;"></div>
<span class="t" style="left:145.30px;top:610.20px;font-size:11px;line-height:14px;color:#000;transform:scaleX(0.8872);">Active Protocol:</span>
<div class="b" style="left:220.60px;top:608.20px;width:84.40px;height:18.40px;background:#e3e3e3;border:1px solid #adadad;"></div>
<span class="t" style="left:224.80px;top:610.30px;font-size:11px;line-height:14px;color:#000;transform:scaleX(0.8884);">SWD</span>
<svg style="left:291.6px;top:614.2px" width="10" height="7" viewBox="0 0 10 7"><path d="M1 1.2 L5 5.2 L9 1.2" stroke="#404040" stroke-width="1.1" fill="none"/></svg>
<div class="b" style="left:11.00px;top:631.00px;width:296.20px;height:247.40px;border:1px solid #6c6c6c;"></div>
<div class="b" style="left:17.20px;top:640.60px;width:71.40px;height:126.40px;border:1px solid #dcdcdc;"></div>
<div class="b" style="left:93.40px;top:640.60px;width:85.00px;height:51.60px;border:1px solid #dcdcdc;"></div>
<div class="b" style="left:23.00px;top:634.00px;width:31.00px;height:12.00px;background:#f0f0f0;"></div>
<div class="b" style="left:99.40px;top:634.00px;width:63.60px;height:12.00px;background:#f0f0f0;"></div>
<span class="t" style="left:24.90px;top:633.50px;font-size:11px;line-height:14px;color:#000;transform:scaleX(0.8660);">Power</span>
<span class="t" style="left:101.30px;top:633.50px;font-size:11px;line-height:14px;color:#000;transform:scaleX(0.8812);">Acquire Mode</span>
<svg style="left:21.0px;top:651.4px" width="14" height="14" viewBox="0 0 14 14"><circle cx="7" cy="7" r="5.7" fill="#fff" stroke="#333" stroke-width="1"/><circle cx="7" cy="7" r="3" fill="#333"/></svg>
<span class="t" style="left:39.20px;top:651.30px;font-size:11px;line-height:14px;color:#000;transform:scaleX(0.8994);">5.0 V</span>
<svg style="left:21.0px;top:671.8px" width="14" height="14" viewBox="0 0 14 14"><circle cx="7" cy="7" r="5.7" fill="#fff" stroke="#333" stroke-width="1"/></svg>
<span class="t" style="left:39.20px;top:671.70px;font-size:11px;line-height:14px;color:#000;transform:scaleX(0.8994);">3.3 V</span>
<svg style="left:21.0px;top:692.4px" width="14" height="14" viewBox="0 0 14 14"><circle cx="7" cy="7" r="5.7" fill="#fff" stroke="#333" stroke-width="1"/></svg>
<span class="t" style="left:39.20px;top:692.30px;font-size:11px;line-height:14px;color:#000;transform:scaleX(0.8994);">2.5 V</span>
<svg style="left:21.0px;top:713.0px" width="14" height="14" viewBox="0 0 14 14"><circle cx="7" cy="7" r="5.7" fill="#fff" stroke="#333" stroke-width="1"/></svg>
<span class="t" style="left:39.20px;top:712.90px;font-size:11px;line-height:14px;color:#000;transform:scaleX(0.8994);">1.8 V</span>
<svg style="left:21.0px;top:733.6px" width="14" height="14" viewBox="0 0 14 14"><circle cx="7" cy="7" r="5.7" fill="#fff" stroke="#333" stroke-width="1"/></svg>
<span class="t" style="left:39.20px;top:733.50px;font-size:11px;line-height:14px;color:#000;transform:scaleX(0.8451);">External</span>
<svg style="left:97.3px;top:650.6px" width="14" height="14" viewBox="0 0 14 14"><circle cx="7" cy="7" r="5.7" fill="#fff" stroke="#333" stroke-width="1"/><circle cx="7" cy="7" r="3" fill="#333"/></svg>
<span class="t" style="left:116.00px;top:650.50px;font-size:11px;line-height:14px;color:#000;transform:scaleX(0.8666);">Reset</span>
<svg style="left:97.3px;top:670.8px" width="14" height="14" viewBox="0 0 14 14"><circle cx="7" cy="7" r="5.7" fill="#fff" stroke="#333" stroke-width="1"/></svg>
<span class="t" style="left:116.00px;top:670.70px;font-size:11px;line-height:14px;color:#000;transform:scaleX(0.8584);">Power Cycle</span>
<div class="b" style="left:216.20px;top:930.40px;width:89.20px;height:22.80px;background:#e1e1e1;border:1px solid #adadad;"></div>
<span class="t" style="left:252.40px;top:934.40px;font-size:11px;line-height:14px;color:#000;transform:scaleX(0.9375);">OK</span>
<div class="b" style="left:312.80px;top:930.40px;width:89.20px;height:22.80px;background:#e1e1e1;border:2px solid #0078d7;"></div>
<span class="t" style="left:341.30px;top:934.40px;font-size:11px;line-height:14px;color:#000;transform:scaleX(0.8762);">Cancel</span>
<!-- Device Manager window -->
<div class="win" style="left:64.2px;top:4.6px;width:711.6px;height:521.4px;background:#fff;border:1px solid #7d7d7d;overflow:visible;box-shadow:0 3px 14px 0 rgba(0,0,0,.30);"></div>
<svg style="left:73.0px;top:10.8px" width="12.6" height="13.6" viewBox="0 0 13 14"><rect x="4.6" y="0.2" width="4" height="6.4" fill="#3a3a3a"/><rect x="5.9" y="1.6" width="1.5" height="1.7" fill="#39d24a"/><rect x="0.5" y="6.6" width="12" height="6.6" rx="0.8" fill="#e2e2e2" stroke="#9c9c9c" stroke-width=".8"/><rect x="2.2" y="8.6" width="1.7" height="2.6" fill="#222"/><rect x="9.1" y="8.6" width="1.7" height="2.6" fill="#222"/><rect x="4.6" y="6.6" width="4" height="1.4" fill="#bdbdbd"/></svg>
<span class="t" style="left:91.80px;top:11.50px;font-size:12px;line-height:14px;color:#000;transform:scaleX(0.8813);">Device Manager</span>
<div class="b" style="left:666.40px;top:18.00px;width:9.40px;height:1.10px;background:#222;"></div>
<div class="b" style="left:707.00px;top:13.60px;width:9.60px;height:9.40px;border:1.2px solid #222;"></div>
<svg style="left:749.4px;top:13.6px" width="10" height="10" viewBox="0 0 10 10"><path d="M0.4 0.4 L9.4 9.4 M9.4 0.4 L0.4 9.4" stroke="#222" stroke-width="1.15" fill="none"/></svg>
<svg style="left:60px;top:17px" width="20" height="8" viewBox="60 17 20 8"><path d="M60 20.2 L66 20.4 L73.6 19.8 L75.6 20.6 L73 21.8 L66 23.4 L60 24.4Z" fill="#0a0a0a"/></svg>
<span class="t" style="left:74.20px;top:35.80px;font-size:11.5px;line-height:14px;color:#000;transform:scaleX(0.8797);">File</span>
<span class="t" style="left:105.20px;top:35.80px;font-size:11.5px;line-height:14px;color:#000;transform:scaleX(0.9793);">Action</span>
<span class="t" style="left:151.60px;top:35.80px;font-size:11.5px;line-height:14px;color:#000;transform:scaleX(0.9224);">View</span>
<span class="t" style="left:189.00px;top:35.80px;font-size:11.5px;line-height:14px;color:#000;transform:scaleX(0.9514);">Help</span>
<div class="b" style="left:65.20px;top:53.00px;width:709.60px;height:1.00px;background:#a6a6a6;"></div>
<svg style="left:65px;top:54.8px" width="160" height="22" viewBox="65 54 160 22" fill="none"><g transform="translate(69.4,57.2)"><path d="M0 7.6 L7.4 0.6 L7.4 4.6 L14.6 4.6 L14.6 10.6 L7.4 10.6 L7.4 14.6Z" fill="#9c9c9c" stroke="#7a7a7a" stroke-width=".9"/><path d="M2 7.6 L6.6 3.2 L6.6 5.6 L13.6 5.6" stroke="#c9c9c9" stroke-width="1"/></g><g transform="translate(104.8,57.2) scale(-1,1)"><path d="M0 7.6 L7.4 0.6 L7.4 4.6 L14.6 4.6 L14.6 10.6 L7.4 10.6 L7.4 14.6Z" fill="#9c9c9c" stroke="#7a7a7a" stroke-width=".9"/><path d="M2 7.6 L6.6 3.2 L6.6 5.6 L13.6 5.6" stroke="#c9c9c9" stroke-width="1"/></g><path d="M110.8 56.6 V72.8" stroke="#a9a9a9" stroke-width="1"/><path d="M139.4 56.6 V72.8" stroke="#a9a9a9" stroke-width="1"/><path d="M188.3 56.6 V72.8" stroke="#a9a9a9" stroke-width="1"/><rect x="118.6" y="59" width="14.4" height="12" fill="#fbfbfb" stroke="#8e8e8e" stroke-width="1"/><path d="M118.6 60.4 h14.4" stroke="#c9c9c9" stroke-width="1.4"/><path d="M118.6 62.2 h14.4" stroke="#8e8e8e" stroke-width=".9"/><path d="M123.2 62.2 V71" stroke="#8e8e8e" stroke-width=".9"/><path d="M120.9 63.6 v6" stroke="#5f8fe0" stroke-width="1.1" stroke-dasharray="1.3 .9"/><path d="M129.6 64.2 v5 l-3.4 -2.5z" fill="#2fae2f"/><rect x="148.2" y="56.8" width="11.4" height="15" rx="1" fill="#2f49c4"/><rect x="148.2" y="56.8" width="11.4" height="15" rx="1" fill="url(#hg)"/><text x="150.6" y="69.4" font-family="Liberation Sans" font-weight="bold" font-size="13" fill="#fff">?</text><rect x="168.4" y="59" width="14.2" height="12" fill="#fbfbfb" stroke="#8e8e8e" stroke-width="1"/><path d="M168.4 60.4 h14.2" stroke="#c9c9c9" stroke-width="1.4"/><path d="M168.4 62.2 h14.2" stroke="#8e8e8e" stroke-width=".9"/><path d="M178 62.2 V71" stroke="#8e8e8e" stroke-width=".9"/><path d="M180.3 63.6 v6" stroke="#5f8fe0" stroke-width="1.1" stroke-dasharray="1.3 .9"/><path d="M171.6 64.2 v5 l3.4 -2.5z" fill="#2fae2f"/><rect x="196.4" y="57.8" width="13.6" height="9.6" fill="#59b7f2" stroke="#3f8fcb" stroke-width="1"/><path d="M197.6 71.4 h9" stroke="#8a8a8a" stroke-width="1.2"/><circle cx="206.4" cy="62.8" r="3.6" fill="#d9f0ff" fill-opacity=".85" stroke="#7d8a96" stroke-width="1.1"/><path d="M203.6 65.6 l-4.6 4.8" stroke="#6d7780" stroke-width="1.5"/><defs><linearGradient id="hg" x1="0" y1="0" x2="1" y2="1"><stop offset="0" stop-color="#5a7cf0"/><stop offset="1" stop-color="#1c2fa0"/></linearGradient></defs></svg>
<div class="b" style="left:65.20px;top:74.20px;width:709.60px;height:1.00px;background:#dcdcdc;"></div>
<div class="b" style="left:65.20px;top:75.20px;width:709.60px;height:5.00px;background:#f0f0f0;"></div>
<div class="b" style="left:65.60px;top:80.20px;width:707.00px;height:1.50px;background:#6d6d6d;"></div>
<div class="b" style="left:65.40px;top:79.80px;width:1.30px;height:422.00px;background:#7c7c7c;"></div>
<div class="b" style="left:759.00px;top:81.30px;width:13.40px;height:420.40px;background:#f0f0f0;"></div>
<div class="b" style="left:759.00px;top:97.60px;width:13.40px;height:286.00px;background:#cdcdcd;"></div>
<svg style="left:760.8px;top:86.6px" width="10" height="7" viewBox="0 0 10 7"><path d="M1 5.6 L5 1.6 L9 5.6" stroke="#505050" stroke-width="1.5" fill="none"/></svg>
<svg style="left:760.6px;top:490.6px" width="10" height="7" viewBox="0 0 10 7"><path d="M1 1.4 L5 5.4 L9 1.4" stroke="#505050" stroke-width="1.5" fill="none"/></svg>
<div class="b" style="left:65.20px;top:501.60px;width:709.60px;height:23.40px;background:#f0f0f0;"></div>
<div class="b" style="left:65.20px;top:501.60px;width:709.60px;height:1.00px;background:#dadada;"></div>
<div class="b" style="left:573.40px;top:505.00px;width:1.00px;height:18.00px;background:#d7d7d7;"></div>
<div class="b" style="left:695.40px;top:505.00px;width:1.00px;height:18.00px;background:#d7d7d7;"></div>
<div class="b" style="left:85.20px;top:82.00px;width:120.80px;height:15.90px;background:#cce8ff;"></div>
<svg style="left:71.6px;top:86.6px" width="9" height="7" viewBox="0 0 9 7"><path d="M0.8 1.2 L4.5 5 L8.2 1.2" stroke="#262626" stroke-width="1.35" fill="none"/></svg>
<svg style="left:87.4px;top:83.4px" width="12.7" height="13.7" viewBox="0 0 13 14"><rect x="4.6" y="0.2" width="4" height="6.4" fill="#3a3a3a"/><rect x="5.9" y="1.6" width="1.5" height="1.7" fill="#39d24a"/><rect x="0.5" y="6.6" width="12" height="6.6" rx="0.8" fill="#e2e2e2" stroke="#9c9c9c" stroke-width=".8"/><rect x="2.2" y="8.6" width="1.7" height="2.6" fill="#222"/><rect x="9.1" y="8.6" width="1.7" height="2.6" fill="#222"/><rect x="4.6" y="6.6" width="4" height="1.4" fill="#bdbdbd"/></svg>
<span class="t" style="left:106.20px;top:83.00px;font-size:11.5px;line-height:14px;color:#000;transform:scaleX(0.9468);">Maxwells-Alienware</span>
<span class="t" style="left:123.00px;top:99.41px;font-size:11.5px;line-height:14px;color:#000;transform:scaleX(0.9717);">Audio inputs and outputs</span>
<svg style="left:90.7px;top:102.6px" width="6" height="9" viewBox="0 0 6 9"><path d="M1 0.8 L4.8 4.5 L1 8.2" stroke="#a0a0a0" stroke-width="1.3" fill="none"/></svg>
<span class="t" style="left:123.00px;top:115.82px;font-size:11.5px;line-height:14px;color:#000;transform:scaleX(0.9035);">Batteries</span>
<svg style="left:90.7px;top:119.0px" width="6" height="9" viewBox="0 0 6 9"><path d="M1 0.8 L4.8 4.5 L1 8.2" stroke="#a0a0a0" stroke-width="1.3" fill="none"/></svg>
<span class="t" style="left:123.00px;top:132.23px;font-size:11.5px;line-height:14px;color:#000;transform:scaleX(0.9775);">Bluetooth</span>
<svg style="left:90.7px;top:135.4px" width="6" height="9" viewBox="0 0 6 9"><path d="M1 0.8 L4.8 4.5 L1 8.2" stroke="#a0a0a0" stroke-width="1.3" fill="none"/></svg>
<span class="t" style="left:123.00px;top:148.64px;font-size:11.5px;line-height:14px;color:#000;transform:scaleX(0.9003);">Cameras</span>
<svg style="left:90.7px;top:151.8px" width="6" height="9" viewBox="0 0 6 9"><path d="M1 0.8 L4.8 4.5 L1 8.2" stroke="#a0a0a0" stroke-width="1.3" fill="none"/></svg>
<span class="t" style="left:123.00px;top:165.05px;font-size:11.5px;line-height:14px;color:#000;transform:scaleX(0.9804);">Computer</span>
<svg style="left:90.7px;top:168.2px" width="6" height="9" viewBox="0 0 6 9"><path d="M1 0.8 L4.8 4.5 L1 8.2" stroke="#a0a0a0" stroke-width="1.3" fill="none"/></svg>
<span class="t" style="left:123.00px;top:181.46px;font-size:11.5px;line-height:14px;color:#000;transform:scaleX(0.9159);">Disk drives</span>
<svg style="left:90.7px;top:184.7px" width="6" height="9" viewBox="0 0 6 9"><path d="M1 0.8 L4.8 4.5 L1 8.2" stroke="#a0a0a0" stroke-width="1.3" fill="none"/></svg>
<span class="t" style="left:123.00px;top:197.87px;font-size:11.5px;line-height:14px;color:#000;transform:scaleX(0.9165);">Display adapters</span>
<svg style="left:90.7px;top:201.1px" width="6" height="9" viewBox="0 0 6 9"><path d="M1 0.8 L4.8 4.5 L1 8.2" stroke="#a0a0a0" stroke-width="1.3" fill="none"/></svg>
<span class="t" style="left:123.00px;top:214.28px;font-size:11.5px;line-height:14px;color:#000;transform:scaleX(0.9392);">Firmware</span>
<svg style="left:90.7px;top:217.5px" width="6" height="9" viewBox="0 0 6 9"><path d="M1 0.8 L4.8 4.5 L1 8.2" stroke="#a0a0a0" stroke-width="1.3" fill="none"/></svg>
<span class="t" style="left:123.00px;top:230.69px;font-size:11.5px;line-height:14px;color:#000;transform:scaleX(0.9334);">Human Interface Devices</span>
<svg style="left:90.7px;top:233.9px" width="6" height="9" viewBox="0 0 6 9"><path d="M1 0.8 L4.8 4.5 L1 8.2" stroke="#a0a0a0" stroke-width="1.3" fill="none"/></svg>
<span class="t" style="left:123.00px;top:247.10px;font-size:11.5px;line-height:14px;color:#000;transform:scaleX(0.9186);">IDE ATA/ATAPI controllers</span>
<svg style="left:90.7px;top:250.3px" width="6" height="9" viewBox="0 0 6 9"><path d="M1 0.8 L4.8 4.5 L1 8.2" stroke="#a0a0a0" stroke-width="1.3" fill="none"/></svg>
<span class="t" style="left:123.00px;top:263.51px;font-size:11.5px;line-height:14px;color:#000;transform:scaleX(0.9447);">Imaging devices</span>
<svg style="left:90.7px;top:266.7px" width="6" height="9" viewBox="0 0 6 9"><path d="M1 0.8 L4.8 4.5 L1 8.2" stroke="#a0a0a0" stroke-width="1.3" fill="none"/></svg>
<span class="t" style="left:123.00px;top:279.92px;font-size:11.5px;line-height:14px;color:#000;transform:scaleX(0.9186);">Keyboards</span>
<svg style="left:90.7px;top:283.1px" width="6" height="9" viewBox="0 0 6 9"><path d="M1 0.8 L4.8 4.5 L1 8.2" stroke="#a0a0a0" stroke-width="1.3" fill="none"/></svg>
<span class="t" style="left:123.00px;top:296.33px;font-size:11.5px;line-height:14px;color:#000;transform:scaleX(0.9584);">Mice and other pointing devices</span>
<svg style="left:90.7px;top:299.5px" width="6" height="9" viewBox="0 0 6 9"><path d="M1 0.8 L4.8 4.5 L1 8.2" stroke="#a0a0a0" stroke-width="1.3" fill="none"/></svg>
<span class="t" style="left:123.00px;top:312.74px;font-size:11.5px;line-height:14px;color:#000;">Monitors</span>
<svg style="left:90.7px;top:315.9px" width="6" height="9" viewBox="0 0 6 9"><path d="M1 0.8 L4.8 4.5 L1 8.2" stroke="#a0a0a0" stroke-width="1.3" fill="none"/></svg>
<span class="t" style="left:123.00px;top:329.15px;font-size:11.5px;line-height:14px;color:#000;transform:scaleX(0.9432);">Network adapters</span>
<svg style="left:90.7px;top:332.3px" width="6" height="9" viewBox="0 0 6 9"><path d="M1 0.8 L4.8 4.5 L1 8.2" stroke="#a0a0a0" stroke-width="1.3" fill="none"/></svg>
<span class="t" style="left:123.00px;top:345.56px;font-size:11.5px;line-height:14px;color:#000;transform:scaleX(0.9230);">Ports (COM &amp; LPT)</span>
<svg style="left:89.4px;top:349.9px" width="9" height="7" viewBox="0 0 9 7"><path d="M0.8 1.2 L4.5 5 L8.2 1.2" stroke="#262626" stroke-width="1.35" fill="none"/></svg>
<span class="t" style="left:140.20px;top:361.97px;font-size:11.5px;line-height:14px;color:#000;transform:scaleX(0.9104);">MiniProg4 USB-UART (COM3)</span>
<span class="t" style="left:140.20px;top:378.38px;font-size:11.5px;line-height:14px;color:#000;transform:scaleX(0.8916);">USB Serial Port (COM12)</span>
<span class="t" style="left:123.00px;top:394.79px;font-size:11.5px;line-height:14px;color:#000;transform:scaleX(0.9370);">Print queues</span>
<svg style="left:90.7px;top:398.0px" width="6" height="9" viewBox="0 0 6 9"><path d="M1 0.8 L4.8 4.5 L1 8.2" stroke="#a0a0a0" stroke-width="1.3" fill="none"/></svg>
<span class="t" style="left:123.00px;top:411.20px;font-size:11.5px;line-height:14px;color:#000;transform:scaleX(0.9339);">Printers</span>
<svg style="left:90.7px;top:414.4px" width="6" height="9" viewBox="0 0 6 9"><path d="M1 0.8 L4.8 4.5 L1 8.2" stroke="#a0a0a0" stroke-width="1.3" fill="none"/></svg>
<span class="t" style="left:123.00px;top:427.61px;font-size:11.5px;line-height:14px;color:#000;transform:scaleX(0.8954);">Processors</span>
<svg style="left:90.7px;top:430.8px" width="6" height="9" viewBox="0 0 6 9"><path d="M1 0.8 L4.8 4.5 L1 8.2" stroke="#a0a0a0" stroke-width="1.3" fill="none"/></svg>
<span class="t" style="left:123.00px;top:444.02px;font-size:11.5px;line-height:14px;color:#000;transform:scaleX(0.9197);">Security devices</span>
<svg style="left:90.7px;top:447.2px" width="6" height="9" viewBox="0 0 6 9"><path d="M1 0.8 L4.8 4.5 L1 8.2" stroke="#a0a0a0" stroke-width="1.3" fill="none"/></svg>
<span class="t" style="left:123.00px;top:460.43px;font-size:11.5px;line-height:14px;color:#000;transform:scaleX(0.9110);">Sensor I/O devices</span>
<svg style="left:90.7px;top:463.6px" width="6" height="9" viewBox="0 0 6 9"><path d="M1 0.8 L4.8 4.5 L1 8.2" stroke="#a0a0a0" stroke-width="1.3" fill="none"/></svg>
<span class="t" style="left:123.00px;top:476.84px;font-size:11.5px;line-height:14px;color:#000;transform:scaleX(0.9094);">Smart card readers</span>
<svg style="left:90.7px;top:480.0px" width="6" height="9" viewBox="0 0 6 9"><path d="M1 0.8 L4.8 4.5 L1 8.2" stroke="#a0a0a0" stroke-width="1.3" fill="none"/></svg>
<span class="t" style="left:123.00px;top:493.25px;font-size:11.5px;line-height:14px;color:#000;transform:scaleX(0.9035);">Smart cards</span>
<svg style="left:90.7px;top:496.4px" width="6" height="9" viewBox="0 0 6 9"><path d="M1 0.8 L4.8 4.5 L1 8.2" stroke="#a0a0a0" stroke-width="1.3" fill="none"/></svg>
<svg style="left:103.6px;top:98.9px" width="16" height="16" viewBox="0 0 16 16" fill="none"><path d="M2.2 5.4 h2.6 l4.2 -4 v13.4 l-4.2 -4 h-2.6z" fill="#a9a9a9" stroke="#777" stroke-width=".8"/><path d="M8.6 2.2 v11.6" stroke="#5e5e5e" stroke-width="1"/><path d="M5 5.6 v5" stroke="#d4d4d4" stroke-width="1"/></svg>
<svg style="left:103.6px;top:115.3px" width="16" height="16" viewBox="0 0 16 16" fill="none"><path d="M1.4 1.6 q1 2.8 3.2 2.4" stroke="#333" stroke-width=".9"/><rect x="4.4" y="2.4" width="8" height="11.6" rx="3" fill="#3fae3f" stroke="#2a7a2a" stroke-width=".8"/><ellipse cx="8.4" cy="3.4" rx="3.2" ry="1.3" fill="#e9f5e9" stroke="#888" stroke-width=".6"/><path d="M0 8 h3.4 M0 10 h3.4" stroke="#d9a514" stroke-width="1.2"/><path d="M3.2 6.8 h2.2 q2.4 2.2 0 4.6 h-2.2z" fill="#4a4a4a"/><path d="M7.6 9 q4.4 .8 6 -2.2" stroke="#222" stroke-width="1.1"/><path d="M5.4 13 q3 1.6 6 0" stroke="#8fe08f" stroke-width="1"/></svg>
<svg style="left:103.6px;top:131.7px" width="16" height="16" viewBox="0 0 16 16" fill="none"><rect x="2.6" y="0.6" width="10.6" height="14.6" rx="5.2" fill="#0a7cf2"/><path d="M5.4 5 L10.4 10.2 L7.9 12.6 V3.2 L10.4 5.6 L5.4 10.8" stroke="#fff" stroke-width="1.1"/></svg>
<svg style="left:103.6px;top:148.1px" width="16" height="16" viewBox="0 0 16 16" fill="none"><circle cx="8" cy="6.4" r="5.6" fill="#c4c4c4" stroke="#6d6d6d" stroke-width="1"/><circle cx="8" cy="6.4" r="3.4" fill="#555"/><circle cx="8" cy="6.4" r="2" fill="#2d6fc0"/><circle cx="7.4" cy="5.8" r=".7" fill="#b9dcff"/><path d="M8 12 v2.2 M3.6 14.8 h8.8" stroke="#333" stroke-width="1.3"/></svg>
<svg style="left:103.6px;top:164.6px" width="16" height="16" viewBox="0 0 16 16" fill="none"><rect x="0.9" y="2.2" width="13.8" height="9" fill="#4fb4f2" stroke="#2f8fd0" stroke-width="1"/><path d="M1.6 3.0 L14.4 3.0 V6.4 H1.6Z" fill="#7fcbf8" fill-opacity=".55"/><path d="M6 12.6 h4 M4.6 13.6 h6.8" stroke="#9fb8cc" stroke-width="1"/><path d="M0.8 15.6 h14.4" stroke="#a9bfd2" stroke-width="1.4"/></svg>
<svg style="left:103.6px;top:181.0px" width="16" height="16" viewBox="0 0 16 16" fill="none"><path d="M3.2 5.4 h9.6 l1.8 3.6 h-13.2z" fill="#dcdcdc" stroke="#b9b9b9" stroke-width=".6"/><rect x="1.4" y="9" width="13.2" height="3.8" rx=".6" fill="#2b2b2b"/><rect x="11" y="10.2" width="1.7" height="1.5" fill="#37d84a"/></svg>
<svg style="left:103.6px;top:197.4px" width="16" height="16" viewBox="0 0 16 16" fill="none"><rect x="0.9" y="1.4" width="13.8" height="9" fill="#4fb4f2" stroke="#2f8fd0" stroke-width="1"/><path d="M1.6 2.2 L14.4 2.2 V5.6 H1.6Z" fill="#7fcbf8" fill-opacity=".55"/><rect x="7" y="8.4" width="8.6" height="5.4" fill="#2f9a55" stroke="#1c6b38" stroke-width=".7"/><rect x="9" y="9.8" width="3.4" height="2.2" fill="#333"/><rect x="7.6" y="13.8" width="5.6" height="1.6" fill="#f0a21c"/><path d="M4.6 12.2 h2.4" stroke="#9fb8cc" stroke-width="1"/></svg>
<svg style="left:103.6px;top:213.8px" width="16" height="16" viewBox="0 0 16 16" fill="none"><path d="M3 1.4 h3.4 q1.6 2.2 3.2 0 h3.4 v13.8 h-10z" fill="#3a3a3a" stroke="#111" stroke-width=".9"/><rect x="4.8" y="4.4" width="6.4" height="9" fill="#555"/><path d="M2.4 4 v10" stroke="#9a9a9a" stroke-width="1" stroke-dasharray="1 1"/><path d="M13.6 4 v10" stroke="#9a9a9a" stroke-width="1" stroke-dasharray="1 1"/></svg>
<svg style="left:103.6px;top:230.2px" width="16" height="16" viewBox="0 0 16 16" fill="none"><rect x="1.6" y="1.8" width="12.4" height="5.8" rx=".8" fill="#e3e3e3" stroke="#9a9a9a" stroke-width=".8"/><path d="M3 3.6 h9.6 M3 5.6 h9.6" stroke="#fdfdfd" stroke-width="1" stroke-dasharray="1.6 .7"/><path d="M1.4 13.8 q-1 -5.4 2.6 -5.8 h5 q3.4 .4 2.6 5.8 q-1.6 .6 -2.6 -2.4 h-5 q-1 3 -2.6 2.4z" fill="#6e7b88" stroke="#4a545e" stroke-width=".6"/><circle cx="4.4" cy="9.8" r="1" fill="#39a0f0"/><circle cx="8.4" cy="9.8" r=".9" fill="#e8a020"/><rect x="12.8" y="8.2" width="2.8" height="5.8" rx="1.4" fill="#77828e" stroke="#4a545e" stroke-width=".6"/></svg>
<svg style="left:103.6px;top:246.6px" width="16" height="16" viewBox="0 0 16 16" fill="none"><path d="M2.6 1.6 h10.4 l1.4 3 h-13.2z" fill="#d9d9d9"/><rect x="1.2" y="4.6" width="13.2" height="3.2" fill="#333"/><rect x="6.6" y="6.2" width="8.8" height="6.6" fill="#2f9a55" stroke="#1c6b38" stroke-width=".7"/><rect x="8.8" y="8" width="3.6" height="2.6" fill="#2c2c2c"/><rect x="7.4" y="12.8" width="5.6" height="1.7" fill="#f0a21c"/></svg>
<svg style="left:103.6px;top:263.0px" width="16" height="16" viewBox="0 0 16 16" fill="none"><path d="M2.4 0.8 L14 7.2" stroke="#3a3a3a" stroke-width="1.5"/><rect x="6.6" y="7.4" width="8.4" height="7.2" fill="#e8e8e8" stroke="#8a8a8a" stroke-width=".8"/><circle cx="11.4" cy="11" r="2" fill="#5a7f96" stroke="#33566b" stroke-width=".6"/><path d="M0.8 10.6 h5.6" stroke="#333" stroke-width="1.6"/><rect x="4.2" y="8.2" width="2.4" height="5.6" fill="#bcbcbc" stroke="#7a7a7a" stroke-width=".6"/></svg>
<svg style="left:103.6px;top:279.4px" width="16" height="16" viewBox="0 0 16 16" fill="none"><rect x="0.8" y="3.2" width="14.4" height="7.8" rx=".8" fill="#e6e6e6" stroke="#9c9c9c" stroke-width=".8"/><path d="M2.4 5.2 h11.2 M2.4 7 h11.2 M2.4 8.8 h11.2" stroke="#fff" stroke-width="1.1" stroke-dasharray="1.5 .6"/><path d="M0.8 11.6 h14.4" stroke="#2c2c2c" stroke-width="1.5"/></svg>
<svg style="left:103.6px;top:295.8px" width="16" height="16" viewBox="0 0 16 16" fill="none"><rect x="3.8" y="1" width="8.2" height="13.8" rx="4.1" fill="#7b8ea3" stroke="#2f3a46" stroke-width="1.1"/><path d="M7.9 2.4 v5.6" stroke="#1f2730" stroke-width="1.2"/><path d="M5.4 10 q2.6 3.6 5.2 0" stroke="#a9b9c9" stroke-width=".8"/></svg>
<svg style="left:103.6px;top:312.2px" width="16" height="16" viewBox="0 0 16 16" fill="none"><rect x="0.9" y="3.0" width="13.8" height="9" fill="#4fb4f2" stroke="#2f8fd0" stroke-width="1"/><path d="M1.6 3.8 L14.4 3.8 V7.2 H1.6Z" fill="#7fcbf8" fill-opacity=".55"/><path d="M5 13 h6" stroke="#b8c8d6" stroke-width="1.3"/><path d="M4.2 14.6 h7.6" stroke="#cfdbe6" stroke-width="1.1"/></svg>
<svg style="left:103.6px;top:328.6px" width="16" height="16" viewBox="0 0 16 16" fill="none"><rect x="5.4" y="1.2" width="9.8" height="6.8" fill="#4fb4f2" stroke="#2f8fd0" stroke-width=".9"/><rect x="1.6" y="4.2" width="10" height="7.2" fill="#59bbf5" stroke="#2f8fd0" stroke-width=".9"/><path d="M2.4 5 h8.4 v2.6z" fill="#8fd2fa" fill-opacity=".6"/><rect x="0.8" y="12.6" width="13.6" height="2.2" fill="#dadada"/><rect x="4.4" y="12.2" width="6.4" height="2.8" fill="#2fc83a"/><path d="M7.4 11.4 v1" stroke="#2a9a34" stroke-width="1.4"/></svg>
<svg style="left:102.3px;top:345.1px" width="16" height="16" viewBox="0 0 16 16" fill="none"><rect x="4.4" y="0.8" width="7.2" height="3.4" fill="#f2f2f2" stroke="#8a8a8a" stroke-width=".8"/><path d="M6 1 v2 M7.4 1 v2 M8.8 1 v2 M10.2 1 v2" stroke="#aaa" stroke-width=".6"/><path d="M3.2 4.2 h9.6 v6 l-1.8 1.8 h-6 l-1.8 -1.8z" fill="#6b6b6b" stroke="#3c3c3c" stroke-width=".8"/><path d="M3.8 6.4 h8.4 M3.8 8.4 h8.4" stroke="#8a8a8a" stroke-width=".8"/><path d="M5 12 v2.2 M11 12 v2.2" stroke="#3c3c3c" stroke-width="1.5"/><path d="M8 12 v3.4" stroke="#3c3c3c" stroke-width="1.9"/></svg>
<svg style="left:119.5px;top:361.5px" width="16" height="16" viewBox="0 0 16 16" fill="none"><rect x="4.4" y="0.8" width="7.2" height="3.4" fill="#f2f2f2" stroke="#8a8a8a" stroke-width=".8"/><path d="M6 1 v2 M7.4 1 v2 M8.8 1 v2 M10.2 1 v2" stroke="#aaa" stroke-width=".6"/><path d="M3.2 4.2 h9.6 v6 l-1.8 1.8 h-6 l-1.8 -1.8z" fill="#6b6b6b" stroke="#3c3c3c" stroke-width=".8"/><path d="M3.8 6.4 h8.4 M3.8 8.4 h8.4" stroke="#8a8a8a" stroke-width=".8"/><path d="M5 12 v2.2 M11 12 v2.2" stroke="#3c3c3c" stroke-width="1.5"/><path d="M8 12 v3.4" stroke="#3c3c3c" stroke-width="1.9"/></svg>
<svg style="left:119.5px;top:377.9px" width="16" height="16" viewBox="0 0 16 16" fill="none"><rect x="4.4" y="0.8" width="7.2" height="3.4" fill="#f2f2f2" stroke="#8a8a8a" stroke-width=".8"/><path d="M6 1 v2 M7.4 1 v2 M8.8 1 v2 M10.2 1 v2" stroke="#aaa" stroke-width=".6"/><path d="M3.2 4.2 h9.6 v6 l-1.8 1.8 h-6 l-1.8 -1.8z" fill="#6b6b6b" stroke="#3c3c3c" stroke-width=".8"/><path d="M3.8 6.4 h8.4 M3.8 8.4 h8.4" stroke="#8a8a8a" stroke-width=".8"/><path d="M5 12 v2.2 M11 12 v2.2" stroke="#3c3c3c" stroke-width="1.5"/><path d="M8 12 v3.4" stroke="#3c3c3c" stroke-width="1.9"/></svg>
<svg style="left:103.6px;top:394.3px" width="16" height="16" viewBox="0 0 16 16" fill="none"><path d="M4 5.6 l1.2 -3.6 h5.6 l1.2 3.6z" fill="#fff" stroke="#8fb2d8" stroke-width=".8"/><path d="M5.4 3 h5.2" stroke="#3d9be8" stroke-width="1.6"/><rect x="7" y="2.2" width="1.8" height="1.6" fill="#3fc04a"/><rect x="0.8" y="5.6" width="14.4" height="6.4" rx="1" fill="#e4e4e4" stroke="#7d7d7d" stroke-width=".8"/><rect x="3.6" y="8" width="8.8" height="1.8" fill="#1f1f1f"/><rect x="3.8" y="9.8" width="8.4" height="3.6" fill="#fdfdfd" stroke="#b2b2b2" stroke-width=".6"/></svg>
<svg style="left:103.6px;top:410.7px" width="16" height="16" viewBox="0 0 16 16" fill="none"><path d="M4 5.6 l1.2 -3.6 h5.6 l1.2 3.6z" fill="#fff" stroke="#8fb2d8" stroke-width=".8"/><path d="M5.4 3 h5.2" stroke="#3d9be8" stroke-width="1.6"/><rect x="7" y="2.2" width="1.8" height="1.6" fill="#3fc04a"/><rect x="0.8" y="5.6" width="14.4" height="6.4" rx="1" fill="#e4e4e4" stroke="#7d7d7d" stroke-width=".8"/><rect x="3.6" y="8" width="8.8" height="1.8" fill="#1f1f1f"/><rect x="3.8" y="9.8" width="8.4" height="3.6" fill="#fdfdfd" stroke="#b2b2b2" stroke-width=".6"/></svg>
<svg style="left:103.6px;top:427.1px" width="16" height="16" viewBox="0 0 16 16" fill="none"><rect x="1.2" y="1.2" width="13.6" height="13.6" fill="#3e7a50" stroke="#c89a3c" stroke-width="1" stroke-dasharray="1 .8"/><rect x="1.8" y="1.8" width="12.4" height="12.4" fill="#3e7a50"/><rect x="4.4" y="4.4" width="7.2" height="7.2" fill="#e9e9e9" stroke="#c4c4c4" stroke-width=".8"/></svg>
<svg style="left:103.6px;top:443.5px" width="16" height="16" viewBox="0 0 16 16" fill="none"><rect x="3" y="1" width="5.6" height="11.4" fill="#2b2b2b"/><rect x="4.8" y="2.6" width="1.8" height="1.8" fill="#3fe04a"/><path d="M2.2 14 h7.2" stroke="#111" stroke-width="1.8"/><path d="M3.6 12.4 h4.4" stroke="#777" stroke-width="1"/><circle cx="12" cy="5" r="2.2" stroke="#e0a52c" stroke-width="1.5"/><path d="M12 7.4 v6.6 M12 10.4 h1.8 M12 12.4 h1.8" stroke="#e0a52c" stroke-width="1.5"/></svg>
<svg style="left:103.6px;top:459.9px" width="16" height="16" viewBox="0 0 16 16" fill="none"><rect x="0.8" y="3.4" width="14.4" height="9.4" rx="1" fill="#2e2e2e"/><rect x="2.4" y="5" width="11.2" height="6.2" fill="#7fc4ea"/><path d="M3 10.6 l2.4 -3.6 l1.6 2.2 l2 -3 l2 3.2 l1.4 -1.4" stroke="#e9f6ff" stroke-width="1"/></svg>
<svg style="left:103.6px;top:476.3px" width="16" height="16" viewBox="0 0 16 16" fill="none"><rect x="3.6" y="1.4" width="9" height="12" rx="1" fill="#efefef" stroke="#b4b4b4" stroke-width=".8"/><path d="M5.4 12 h5.4" stroke="#9a9a9a" stroke-width="1"/><rect x="7.4" y="9.6" width="4.6" height="4.4" fill="#2f9ef0"/><circle cx="8" cy="7.8" r=".9" fill="#3a8fe0"/></svg>
<svg style="left:103.6px;top:492.8px" width="16" height="16" viewBox="0 0 16 16" fill="none"><rect x="1" y="3.4" width="14" height="10" fill="#8a9298"/><rect x="3" y="8.6" width="3.6" height="3" fill="#e8c040"/></svg>
<div class="b" style="left:66.80px;top:501.60px;width:692.20px;height:1.00px;background:#dadada;"></div>
<div class="b" style="left:66.80px;top:502.60px;width:692.20px;height:7.00px;background:#f0f0f0;"></div>
</body></html>
